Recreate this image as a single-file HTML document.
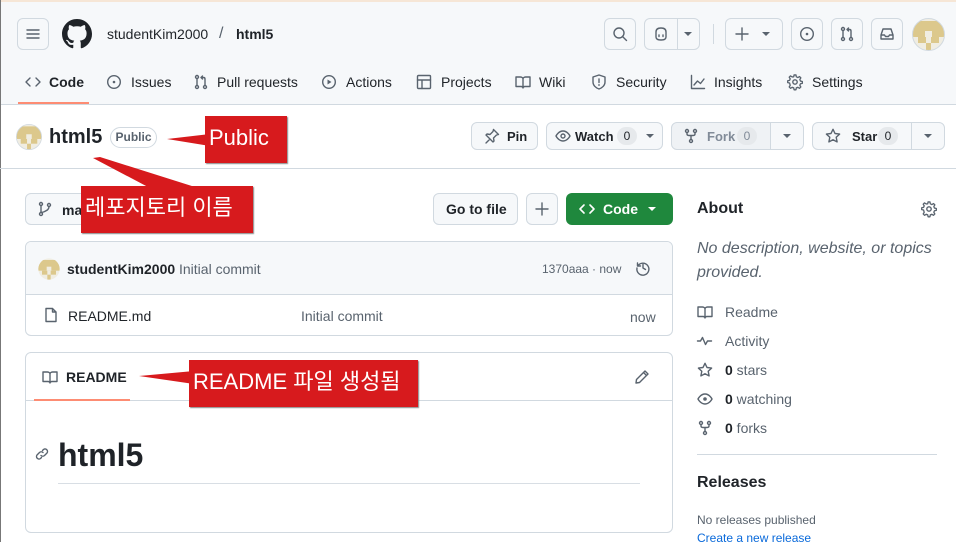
<!DOCTYPE html>
<html><head><meta charset="utf-8"><style>
*{box-sizing:border-box;margin:0;padding:0}
body{width:956px;height:542px;overflow:hidden;background:#fff;font-family:"Liberation Sans","Noto Sans CJK KR",sans-serif;color:#1f2328;position:relative;font-size:14px}
.a{position:absolute}
.btn{position:absolute;border:1px solid #d1d9e0;border-radius:6px;background:#f6f8fa}
.t{position:absolute;white-space:nowrap;line-height:1}
svg{position:absolute;overflow:visible}
.ic{fill:none;stroke:#59636e;stroke-width:1.4;stroke-linecap:round;stroke-linejoin:round}
.cnt{position:absolute;background:#e6e9ec;border-radius:10px;height:18px;width:20px;font-size:12px;text-align:center;line-height:18px}
.red{position:absolute;background:#d71a1d;color:#fff;font-size:22px;line-height:1;box-shadow:1px 1px 1px #888}
</style></head><body>
<div class="a" style="left:0;top:0;width:956px;height:105px;background:#f6f8fa;border-bottom:1px solid #d1d9e0"></div>
<div class="a" style="left:0;top:0;width:956px;height:2px;background:#f6e6d6"></div>
<div class="a" style="left:0;top:0;width:1px;height:542px;background:#777"></div>

<div class="btn" style="left:17px;top:18px;width:32px;height:32px"></div>
<svg style="left:25px;top:26px" width="16" height="16"><path class="ic" d="M2 4h12M2 8h12M2 12h12" stroke="#59636e"/></svg>
<svg style="left:62px;top:19px" width="30" height="30" viewBox="0 0 16 16"><path fill="#1f2328" d="M8 0C3.58 0 0 3.58 0 8c0 3.54 2.29 6.53 5.47 7.59.4.07.55-.17.55-.38 0-.19-.01-.82-.01-1.49-2.01.37-2.53-.49-2.69-.94-.09-.23-.48-.94-.82-1.13-.28-.15-.68-.52-.01-.53.63-.01 1.08.58 1.23.82.72 1.21 1.87.87 2.33.66.07-.52.28-.87.51-1.07-1.78-.2-3.64-.89-3.64-3.95 0-.87.31-1.59.82-2.15-.08-.2-.36-1.02.08-2.12 0 0 .67-.21 2.2.82.64-.18 1.32-.27 2-.27.68 0 1.36.09 2 .27 1.53-1.04 2.2-.82 2.2-.82.44 1.1.16 1.92.08 2.12.51.56.82 1.27.82 2.15 0 3.07-1.87 3.75-3.65 3.95.29.25.54.73.54 1.48 0 1.07-.01 1.93-.01 2.2 0 .21.15.46.55.38A8.013 8.013 0 0016 8c0-4.42-3.58-8-8-8z"/></svg>
<div class="t" style="left:107px;top:27px;font-size:14px">studentKim2000</div>
<div class="t" style="left:219px;top:26px;font-size:16px;color:#59636e">/</div>
<div class="t" style="left:236px;top:27px;font-size:14px;font-weight:bold">html5</div>

<div class="btn" style="left:604px;top:18px;width:32px;height:32px"></div>
<svg style="left:612px;top:26px" width="16" height="16"><circle class="ic" cx="7" cy="7" r="5"/><path class="ic" d="M10.5 10.5l4 4"/></svg>
<div class="btn" style="left:644px;top:18px;width:56px;height:32px"></div>
<div class="a" style="left:677px;top:19px;width:1px;height:30px;background:#d1d9e0"></div>
<svg style="left:653px;top:26px" width="16" height="16"><path class="ic" d="M3 6c0-3 2-4 5-4s5 1 5 4v5c0 2-2 3-5 3s-5-1-5-3z"/><path class="ic" d="M6 9v1.5M10 9v1.5"/></svg>
<svg style="left:684px;top:32px" width="8" height="5"><path d="M0 0h8L4 4z" fill="#59636e"/></svg>
<div class="a" style="left:713px;top:24px;width:1px;height:20px;background:#d1d9e0"></div>
<div class="btn" style="left:725px;top:18px;width:58px;height:32px"></div>
<svg style="left:734px;top:26px" width="16" height="16"><path class="ic" d="M8 2v12M2 8h12"/></svg>
<svg style="left:762px;top:32px" width="8" height="5"><path d="M0 0h8L4 4z" fill="#59636e"/></svg>
<div class="btn" style="left:791px;top:18px;width:32px;height:32px"></div>
<svg style="left:799px;top:26px" width="16" height="16"><circle class="ic" cx="8" cy="8" r="6.3"/><circle cx="8" cy="8" r="1.3" fill="#59636e"/></svg>
<div class="btn" style="left:831px;top:18px;width:32px;height:32px"></div>
<svg style="left:839px;top:26px" width="16" height="16"><circle class="ic" cx="4" cy="3" r="1.5"/><circle class="ic" cx="4" cy="13" r="1.5"/><circle class="ic" cx="12" cy="13" r="1.5"/><path class="ic" d="M4 4.5v7M12 11.5V5c0-1-.5-1.5-1.5-1.5H8M9.5 2L8 3.5 9.5 5"/></svg>
<div class="btn" style="left:871px;top:18px;width:32px;height:32px"></div>
<svg style="left:879px;top:26px" width="16" height="16"><path class="ic" d="M2 9l2-6h8l2 6v4H2zM2 9h3.5l1 1.5h3l1-1.5H14"/></svg>
<svg style="left:912px;top:18px" width="33" height="33" viewBox="0 0 33 33"><clipPath id="c1"><circle cx="16.5" cy="16.5" r="16"/></clipPath><g clip-path="url(#c1)"><rect width="33" height="33" fill="#f0ede2"/><rect x="0" y="3" width="33" height="16" fill="#dcc88c"/><rect x="6" y="19" width="8" height="6" fill="#dcc88c"/><rect x="19" y="19" width="8" height="6" fill="#dcc88c"/><rect x="14" y="25" width="5" height="8" fill="#dcc88c"/><rect x="13" y="13" width="7" height="6" fill="#f0ede2"/></g><circle cx="16.5" cy="16.5" r="16" fill="none" stroke="#d1d9e0"/></svg>

<!-- nav -->
<svg style="left:25px;top:74px" width="16" height="16"><path class="ic" d="M5 4L1 8l4 4M11 4l4 4-4 4"/></svg>
<div class="t" style="left:49px;top:75px;font-size:14px;font-weight:bold">Code</div>
<div class="a" style="left:18px;top:102px;width:71px;height:2px;background:#fd8c73"></div>
<svg style="left:106px;top:74px" width="16" height="16"><circle class="ic" cx="8" cy="8" r="6.3"/><circle cx="8" cy="8" r="1.3" fill="#59636e"/></svg>
<div class="t" style="left:131px;top:75px">Issues</div>
<svg style="left:193px;top:74px" width="16" height="16"><circle class="ic" cx="4" cy="3" r="1.5"/><circle class="ic" cx="4" cy="13" r="1.5"/><circle class="ic" cx="12" cy="13" r="1.5"/><path class="ic" d="M4 4.5v7M12 11.5V5c0-1-.5-1.5-1.5-1.5H8M9.5 2L8 3.5 9.5 5"/></svg>
<div class="t" style="left:217px;top:75px">Pull requests</div>
<svg style="left:321px;top:74px" width="16" height="16"><circle class="ic" cx="8" cy="8" r="6.3"/><path d="M6.5 5.5v5l4-2.5z" fill="#59636e"/></svg>
<div class="t" style="left:346px;top:75px">Actions</div>
<svg style="left:416px;top:74px" width="16" height="16"><rect class="ic" x="1.5" y="1.5" width="13" height="13" rx="1"/><path class="ic" d="M1.5 6h13M6 6v8.5"/></svg>
<div class="t" style="left:441px;top:75px">Projects</div>
<svg style="left:515px;top:74px" width="16" height="16"><path class="ic" d="M1 3h4.5C7 3 8 4 8 5v9c0-1-1-1.5-2-1.5H1zM15 3h-4.5C9 3 8 4 8 5v9c0-1 1-1.5 2-1.5h5z"/></svg>
<div class="t" style="left:539px;top:75px">Wiki</div>
<svg style="left:591px;top:74px" width="16" height="16"><path class="ic" d="M8 1l6 2v5c0 3.5-3 6-6 7-3-1-6-3.5-6-7V3z"/><path class="ic" d="M8 5v3.5"/><circle cx="8" cy="11" r=".9" fill="#59636e"/></svg>
<div class="t" style="left:616px;top:75px">Security</div>
<svg style="left:690px;top:74px" width="16" height="16"><path class="ic" d="M1.5 1.5v13h13M4 11l3.5-4 3 2.5L14 5"/></svg>
<div class="t" style="left:714px;top:75px">Insights</div>
<svg style="left:787px;top:74px" width="16" height="16"><circle class="ic" cx="8" cy="8" r="2.2"/><path class="ic" d="M7 1h2l.4 2 1.6.8 1.8-1.1 1.4 1.4-1.1 1.8.7 1.6 2 .5v2l-2 .4-.7 1.6 1.1 1.8-1.4 1.4-1.8-1.1-1.6.7-.4 2H7l-.4-2-1.6-.7-1.8 1.1-1.4-1.4 1.1-1.8L2.2 9.6.2 9.2v-2l2-.4.7-1.6-1.1-1.8 1.4-1.4 1.8 1.1L6.6 3z" transform="translate(.5 0) scale(.94)"/></svg>
<div class="t" style="left:812px;top:75px">Settings</div>

<!-- repo header -->
<svg style="left:16px;top:124px" width="26" height="26" viewBox="0 0 33 33"><clipPath id="c2"><circle cx="16.5" cy="16.5" r="16"/></clipPath><g clip-path="url(#c2)"><rect width="33" height="33" fill="#f0ede2"/><rect x="0" y="3" width="33" height="16" fill="#dcc88c"/><rect x="6" y="19" width="8" height="6" fill="#dcc88c"/><rect x="19" y="19" width="8" height="6" fill="#dcc88c"/><rect x="14" y="25" width="5" height="8" fill="#dcc88c"/><rect x="13" y="13" width="7" height="6" fill="#f0ede2"/></g><circle cx="16.5" cy="16.5" r="16" fill="none" stroke="#d1d9e0"/></svg>
<div class="t" style="left:49px;top:127px;font-size:20px;font-weight:bold">html5</div>
<div class="a" style="left:110px;top:127px;width:47px;height:21px;border:1px solid #d1d9e0;border-radius:11px;font-size:12px;font-weight:bold;color:#59636e;text-align:center;line-height:19px">Public</div>

<div class="btn" style="left:471px;top:122px;width:67px;height:28px"></div>
<svg style="left:484px;top:128px" width="16" height="16"><path class="ic" d="M9.5 1.5l5 5-2 .5-3 3 .5 3-1 1-3-3-4 4M4 9l3 3M9.5 1.5L9 3.5l-3 3-3-.5-1 1 3 3"/></svg>
<div class="t" style="left:507px;top:130px;font-size:13px;font-weight:bold">Pin</div>
<div class="btn" style="left:546px;top:122px;width:117px;height:28px"></div>
<svg style="left:555px;top:128px" width="16" height="16"><path class="ic" d="M1 8s2.5-5 7-5 7 5 7 5-2.5 5-7 5-7-5-7-5z"/><circle class="ic" cx="8" cy="8" r="2"/></svg>
<div class="t" style="left:575px;top:130px;font-size:13px;font-weight:bold">Watch</div>
<div class="cnt" style="left:617px;top:127px">0</div>
<svg style="left:646px;top:134px" width="8" height="5"><path d="M0 0h8L4 4z" fill="#59636e"/></svg>
<div class="btn" style="left:671px;top:122px;width:133px;height:28px;background:#eff2f5"></div>
<div class="a" style="left:770px;top:123px;width:1px;height:26px;background:#d1d9e0"></div>
<div class="a" style="left:771px;top:123px;width:32px;height:26px;background:#f6f8fa;border-radius:0 5px 5px 0"></div>
<svg style="left:683px;top:128px" width="16" height="16"><circle class="ic" cx="4" cy="3" r="1.5" stroke="#818b98"/><circle class="ic" cx="12" cy="3" r="1.5" stroke="#818b98"/><circle class="ic" cx="8" cy="13" r="1.5" stroke="#818b98"/><path class="ic" stroke="#818b98" d="M4 4.5v1.5c0 1 1 1.5 2 1.5h4c1 0 2-.5 2-1.5V4.5M8 7.5v4"/></svg>
<div class="t" style="left:707px;top:130px;font-size:13px;font-weight:bold;color:#818b98">Fork</div>
<div class="cnt" style="left:737px;top:127px;color:#818b98">0</div>
<svg style="left:783px;top:134px" width="8" height="5"><path d="M0 0h8L4 4z" fill="#59636e"/></svg>
<div class="btn" style="left:812px;top:122px;width:133px;height:28px"></div>
<div class="a" style="left:911px;top:123px;width:1px;height:26px;background:#d1d9e0"></div>
<svg style="left:825px;top:128px" width="16" height="16"><path class="ic" d="M8 1.3l2 4.2 4.6.6-3.4 3.2.9 4.6L8 11.7l-4.1 2.2.9-4.6L1.4 6.1 6 5.5z"/></svg>
<div class="t" style="left:852px;top:130px;font-size:13px;font-weight:bold">Star</div>
<div class="cnt" style="left:878px;top:127px">0</div>
<svg style="left:924px;top:134px" width="8" height="5"><path d="M0 0h8L4 4z" fill="#59636e"/></svg>
<div class="a" style="left:0;top:168px;width:956px;height:1px;background:#d1d9e0"></div>

<!-- branch row -->
<div class="btn" style="left:25px;top:193px;width:70px;height:32px"></div>
<svg style="left:37px;top:201px" width="16" height="16"><circle class="ic" cx="4" cy="3" r="1.5"/><circle class="ic" cx="4" cy="13" r="1.5"/><circle class="ic" cx="12" cy="4" r="1.5"/><path class="ic" d="M4 4.5v7M12 5.5c0 3-2 4-5.5 5.5L4 11.5"/></svg>
<div class="t" style="left:62px;top:203px;font-weight:bold">main</div>
<div class="btn" style="left:433px;top:193px;width:85px;height:32px"></div>
<div class="t" style="left:446px;top:202px;font-weight:bold">Go to file</div>
<div class="btn" style="left:526px;top:193px;width:32px;height:32px"></div>
<svg style="left:534px;top:201px" width="16" height="16"><path class="ic" d="M8 2v12M2 8h12"/></svg>
<div class="a" style="left:566px;top:193px;width:107px;height:32px;background:#1f883d;border-radius:6px"></div>
<svg style="left:579px;top:201px" width="16" height="16"><path d="M5 4L1 8l4 4M11 4l4 4-4 4" fill="none" stroke="#fff" stroke-width="1.6" stroke-linecap="round" stroke-linejoin="round"/></svg>
<div class="t" style="left:603px;top:202px;font-weight:bold;color:#fff">Code</div>
<svg style="left:648px;top:207px" width="8" height="5"><path d="M0 0h8L4 4z" fill="#fff"/></svg>

<!-- commit box -->
<div class="a" style="left:25px;top:241px;width:648px;height:95px;border:1px solid #d1d9e0;border-radius:6px;overflow:hidden"><div style="height:53px;background:#f6f8fa;border-bottom:1px solid #d1d9e0"></div></div>
<svg style="left:38px;top:258px" width="22" height="22" viewBox="0 0 33 33"><clipPath id="c3"><circle cx="16.5" cy="16.5" r="16"/></clipPath><g clip-path="url(#c3)"><rect width="33" height="33" fill="#f0ede2"/><rect x="0" y="3" width="33" height="16" fill="#dcc88c"/><rect x="6" y="19" width="8" height="6" fill="#dcc88c"/><rect x="19" y="19" width="8" height="6" fill="#dcc88c"/><rect x="14" y="25" width="5" height="8" fill="#dcc88c"/><rect x="13" y="13" width="7" height="6" fill="#f0ede2"/></g></svg>
<div class="t" style="left:67px;top:262px;font-weight:bold;font-size:14px">studentKim2000</div>
<div class="t" style="left:179px;top:262px;color:#59636e">Initial commit</div>
<div class="t" style="left:542px;top:263px;font-size:12px;color:#59636e">1370aaa · now</div>
<svg style="left:635px;top:260px" width="16" height="16"><path class="ic" d="M2.5 3v3h3M2.8 6A6 6 0 1 1 2 8"/><path class="ic" d="M8 4.5V8l2.5 1.5"/></svg>
<svg style="left:43px;top:307px" width="16" height="16"><path class="ic" d="M3 1.5h6.5l3.5 3.5v9.5H3z M9.5 1.5V5h3.5"/></svg>
<div class="t" style="left:68px;top:309px">README.md</div>
<div class="t" style="left:301px;top:309px;color:#59636e">Initial commit</div>
<div class="t" style="left:630px;top:310px;color:#59636e">now</div>

<!-- readme box -->
<div class="a" style="left:25px;top:352px;width:648px;height:181px;border:1px solid #d1d9e0;border-radius:6px"></div>
<div class="a" style="left:26px;top:400px;width:646px;height:1px;background:#d1d9e0"></div>
<div class="a" style="left:34px;top:399px;width:96px;height:2px;background:#fd8c73"></div>
<svg style="left:42px;top:369px" width="16" height="16"><path class="ic" d="M1 3h4.5C7 3 8 4 8 5v9c0-1-1-1.5-2-1.5H1zM15 3h-4.5C9 3 8 4 8 5v9c0-1 1-1.5 2-1.5h5z"/></svg>
<div class="t" style="left:66px;top:370px;font-weight:bold">README</div>
<svg style="left:634px;top:369px" width="16" height="16"><path class="ic" d="M11 2l3 3-8.5 8.5L2 14l.5-3.5z M9.5 3.5l3 3"/></svg>
<svg style="left:34px;top:446px" width="16" height="16"><path class="ic" d="M7 9.5a2.5 2.5 0 0 0 3.5 0l2.5-2.5a2.5 2.5 0 0 0-3.5-3.5L8.5 4.5M9 6.5a2.5 2.5 0 0 0-3.5 0L3 9a2.5 2.5 0 0 0 3.5 3.5l1-1" stroke="#1f2328"/></svg>
<div class="t" style="left:58px;top:439px;font-size:32px;font-weight:bold">html5</div>
<div class="a" style="left:58px;top:483px;width:582px;height:1px;background:#d8dee4"></div>

<!-- about -->
<div class="t" style="left:697px;top:201px;font-size:16px;font-weight:bold">About</div>
<svg style="left:921px;top:201px" width="16" height="16"><circle class="ic" cx="8" cy="8" r="2.2"/><path class="ic" d="M7 1h2l.4 2 1.6.8 1.8-1.1 1.4 1.4-1.1 1.8.7 1.6 2 .5v2l-2 .4-.7 1.6 1.1 1.8-1.4 1.4-1.8-1.1-1.6.7-.4 2H7l-.4-2-1.6-.7-1.8 1.1-1.4-1.4 1.1-1.8L2.2 9.6.2 9.2v-2l2-.4.7-1.6-1.1-1.8 1.4-1.4 1.8 1.1L6.6 3z" transform="translate(.5 0) scale(.94)"/></svg>
<div class="t" style="left:697px;top:241px;font-size:16px;font-style:italic;color:#59636e">No description, website, or topics</div>
<div class="t" style="left:697px;top:265px;font-size:16px;font-style:italic;color:#59636e">provided.</div>
<svg style="left:697px;top:304px" width="16" height="16"><path class="ic" d="M1 3h4.5C7 3 8 4 8 5v9c0-1-1-1.5-2-1.5H1zM15 3h-4.5C9 3 8 4 8 5v9c0-1 1-1.5 2-1.5h5z"/></svg>
<div class="t" style="left:725px;top:305px;color:#59636e">Readme</div>
<svg style="left:697px;top:333px" width="16" height="16"><path class="ic" d="M0.5 8h3l2-3.5 3 7 2-3.5h4"/></svg>
<div class="t" style="left:725px;top:334px;color:#59636e">Activity</div>
<svg style="left:697px;top:362px" width="16" height="16"><path class="ic" d="M8 1.3l2 4.2 4.6.6-3.4 3.2.9 4.6L8 11.7l-4.1 2.2.9-4.6L1.4 6.1 6 5.5z"/></svg>
<div class="t" style="left:725px;top:363px;color:#59636e"><b style="color:#1f2328">0</b> stars</div>
<svg style="left:697px;top:391px" width="16" height="16"><path class="ic" d="M1 8s2.5-5 7-5 7 5 7 5-2.5 5-7 5-7-5-7-5z"/><circle cx="8" cy="8" r="1.8" fill="#59636e"/></svg>
<div class="t" style="left:725px;top:392px;color:#59636e"><b style="color:#1f2328">0</b> watching</div>
<svg style="left:697px;top:420px" width="16" height="16"><circle class="ic" cx="4" cy="3" r="1.5"/><circle class="ic" cx="12" cy="3" r="1.5"/><circle class="ic" cx="8" cy="13" r="1.5"/><path class="ic" d="M4 4.5v1.5c0 1 1 1.5 2 1.5h4c1 0 2-.5 2-1.5V4.5M8 7.5v4"/></svg>
<div class="t" style="left:725px;top:421px;color:#59636e"><b style="color:#1f2328">0</b> forks</div>
<div class="a" style="left:697px;top:454px;width:240px;height:1px;background:#d1d9e0"></div>
<div class="t" style="left:697px;top:475px;font-size:16px;font-weight:bold">Releases</div>
<div class="t" style="left:697px;top:514px;font-size:12px;color:#59636e">No releases published</div>
<div class="t" style="left:697px;top:532px;font-size:12px;color:#0969da">Create a new release</div>

<!-- annotations -->
<svg style="left:0;top:0" width="956" height="542"><polygon points="167,139 210,134 210,146" fill="#d71a1d"/><polygon points="93,158 100,157 195,187 148,187" fill="#d71a1d"/><polygon points="139,376 194,371 194,384" fill="#d71a1d"/></svg>
<div class="red" style="left:205px;top:116px;width:82px;height:47px;padding:11px 0 0 4px">Public</div>
<div class="red" style="left:81px;top:186px;width:172px;height:47px;padding:11px 0 0 4px">레포지토리 이름</div>
<div class="red" style="left:189px;top:360px;width:229px;height:47px;padding:11px 0 0 4px">README 파일 생성됨</div>
</body></html>
